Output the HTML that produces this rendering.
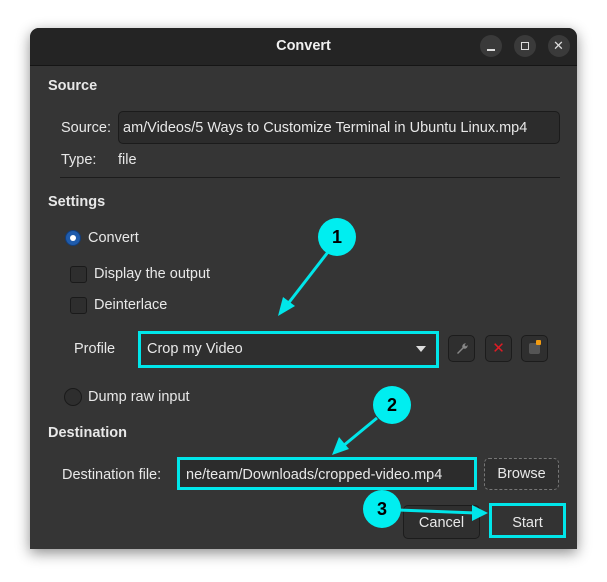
<!DOCTYPE html>
<html><head><meta charset="utf-8"><style>
*{margin:0;padding:0;box-sizing:border-box}
body{width:607px;height:582px;background:#fff;position:relative;overflow:hidden;font-family:"Liberation Sans","DejaVu Sans",sans-serif;font-size:14.5px;color:#e8e8e8}
.a{position:absolute}
.win{left:30px;top:28px;width:547px;height:521px;background:#353535;border-radius:9px 9px 0 0;box-shadow:0 4px 14px rgba(0,0,0,.45)}
.title{left:30px;top:28px;width:547px;height:38px;background:#242424;border-radius:9px 9px 0 0;border-bottom:1px solid #151515}
.wb{width:22px;height:22px;border-radius:50%;background:#3a3a3a;top:35px}
.b{font-weight:bold}
.t{line-height:16px}
.entry{background:#2c2c2c;border:1px solid #1b1b1b;border-radius:5px}
.cyan{border:3px solid #00e6ea}
.btn{background:#2f2f2f;border:1px solid #1c1c1c;border-radius:5px}
.chk{width:17px;height:17px;border:1px solid #1a1a1a;background:#2e2e2e;border-radius:3px}
.circ{width:38px;height:38px;border-radius:50%;background:#00eef0;color:#000;font-weight:bold;font-size:18px;text-align:center;line-height:38px}
</style></head><body>
<div class="a win"></div>
<div class="a title"></div>
<div class="a b t" style="left:0;width:607px;text-align:center;top:38px;color:#f0f0f0">Convert</div>
<div class="a wb" style="left:480px"></div><div class="a" style="left:487px;top:49px;width:8px;height:1.5px;background:#ddd"></div>
<div class="a wb" style="left:514px"></div><div class="a" style="left:521px;top:42px;width:8px;height:8px;border:1.5px solid #ddd"></div>
<div class="a wb" style="left:548px"></div><div class="a" style="left:553px;top:38px;color:#ddd;font-size:13px">✕</div>

<div class="a b t" style="left:48px;top:78px">Source</div>
<div class="a t" style="left:61px;top:120px">Source:</div>
<div class="a entry" style="left:118px;top:111px;width:442px;height:33px"></div>
<div class="a t" style="left:123px;top:120px;white-space:nowrap">am/Videos/5 Ways to Customize Terminal in Ubuntu Linux.mp4</div>
<div class="a t" style="left:61px;top:152px">Type:</div>
<div class="a t" style="left:118px;top:152px">file</div>
<div class="a" style="left:60px;top:177px;width:500px;height:1px;background:#1c1c1c"></div>

<div class="a b t" style="left:48px;top:194px">Settings</div>
<div class="a" style="left:65px;top:230px;width:16px;height:16px;border-radius:50%;background:#1f5bab;border:1px solid #123d7a"></div>
<div class="a" style="left:70px;top:235px;width:6px;height:6px;border-radius:50%;background:#fff"></div>
<div class="a t" style="left:88px;top:230px">Convert</div>
<div class="a chk" style="left:70px;top:266px"></div>
<div class="a t" style="left:94px;top:266px">Display the output</div>
<div class="a chk" style="left:70px;top:297px"></div>
<div class="a t" style="left:94px;top:297px">Deinterlace</div>

<div class="a t" style="left:74px;top:341px">Profile</div>
<div class="a cyan" style="left:138px;top:331px;width:301px;height:37px;background:#2f2f2f"></div>
<div class="a t" style="left:147px;top:341px">Crop my Video</div>
<div class="a" style="left:416px;top:346px;width:0;height:0;border-left:5px solid transparent;border-right:5px solid transparent;border-top:6px solid #ddd"></div>
<div class="a btn" style="left:448px;top:335px;width:27px;height:27px"></div>
<svg class="a" style="left:454px;top:341px" width="15" height="15"><path d="M12 2.5a3 3 0 0 0-3.5 4L3 12l1 1 5.5-5.5a3 3 0 0 0 4-3.5L12 5.5 10.5 4z" fill="#888"/></svg>
<div class="a btn" style="left:485px;top:335px;width:27px;height:27px;color:#e01b24;font-size:15px;text-align:center;line-height:25px">✕</div>
<div class="a btn" style="left:521px;top:335px;width:27px;height:27px"></div>
<div class="a" style="left:529px;top:343px;width:11px;height:11px;background:#555;border-radius:2px"></div>
<div class="a" style="left:536px;top:340px;width:5px;height:5px;background:#f39c12;border-radius:1px"></div>

<div class="a" style="left:64px;top:388px;width:18px;height:18px;border-radius:50%;border:1px solid #1a1a1a;background:#2e2e2e"></div>
<div class="a t" style="left:88px;top:389px">Dump raw input</div>

<div class="a b t" style="left:48px;top:425px">Destination</div>
<div class="a t" style="left:62px;top:467px">Destination file:</div>
<div class="a cyan" style="left:177px;top:457px;width:300px;height:33px;background:#2c2c2c"></div>
<div class="a t" style="left:186px;top:467px;white-space:nowrap">ne/team/Downloads/cropped-video.mp4</div>
<div class="a btn" style="left:484px;top:458px;width:75px;height:32px;border:1px dashed #777;text-align:center;line-height:30px">Browse</div>
<div class="a btn" style="left:403px;top:505px;width:77px;height:34px;text-align:center;line-height:34px">Cancel</div>
<div class="a cyan" style="left:489px;top:503px;width:77px;height:35px;text-align:center;line-height:34px;background:#333">Start</div>

<svg class="a" style="left:0;top:0" width="607" height="582">
<g stroke="#00e6ea" stroke-width="3" fill="#00e6ea">
<line x1="328" y1="252" x2="287" y2="305"/><polygon points="278,316 283,297 295,306" stroke="none"/>
<line x1="377" y1="418" x2="343" y2="446"/><polygon points="332,455 339,437 349,449" stroke="none"/>
<line x1="398" y1="510" x2="476" y2="513"/><polygon points="488,513 472,505 472,521" stroke="none"/>
</g></svg>
<div class="a circ" style="left:318px;top:218px">1</div>
<div class="a circ" style="left:373px;top:386px">2</div>
<div class="a circ" style="left:363px;top:490px">3</div>
</body></html>
